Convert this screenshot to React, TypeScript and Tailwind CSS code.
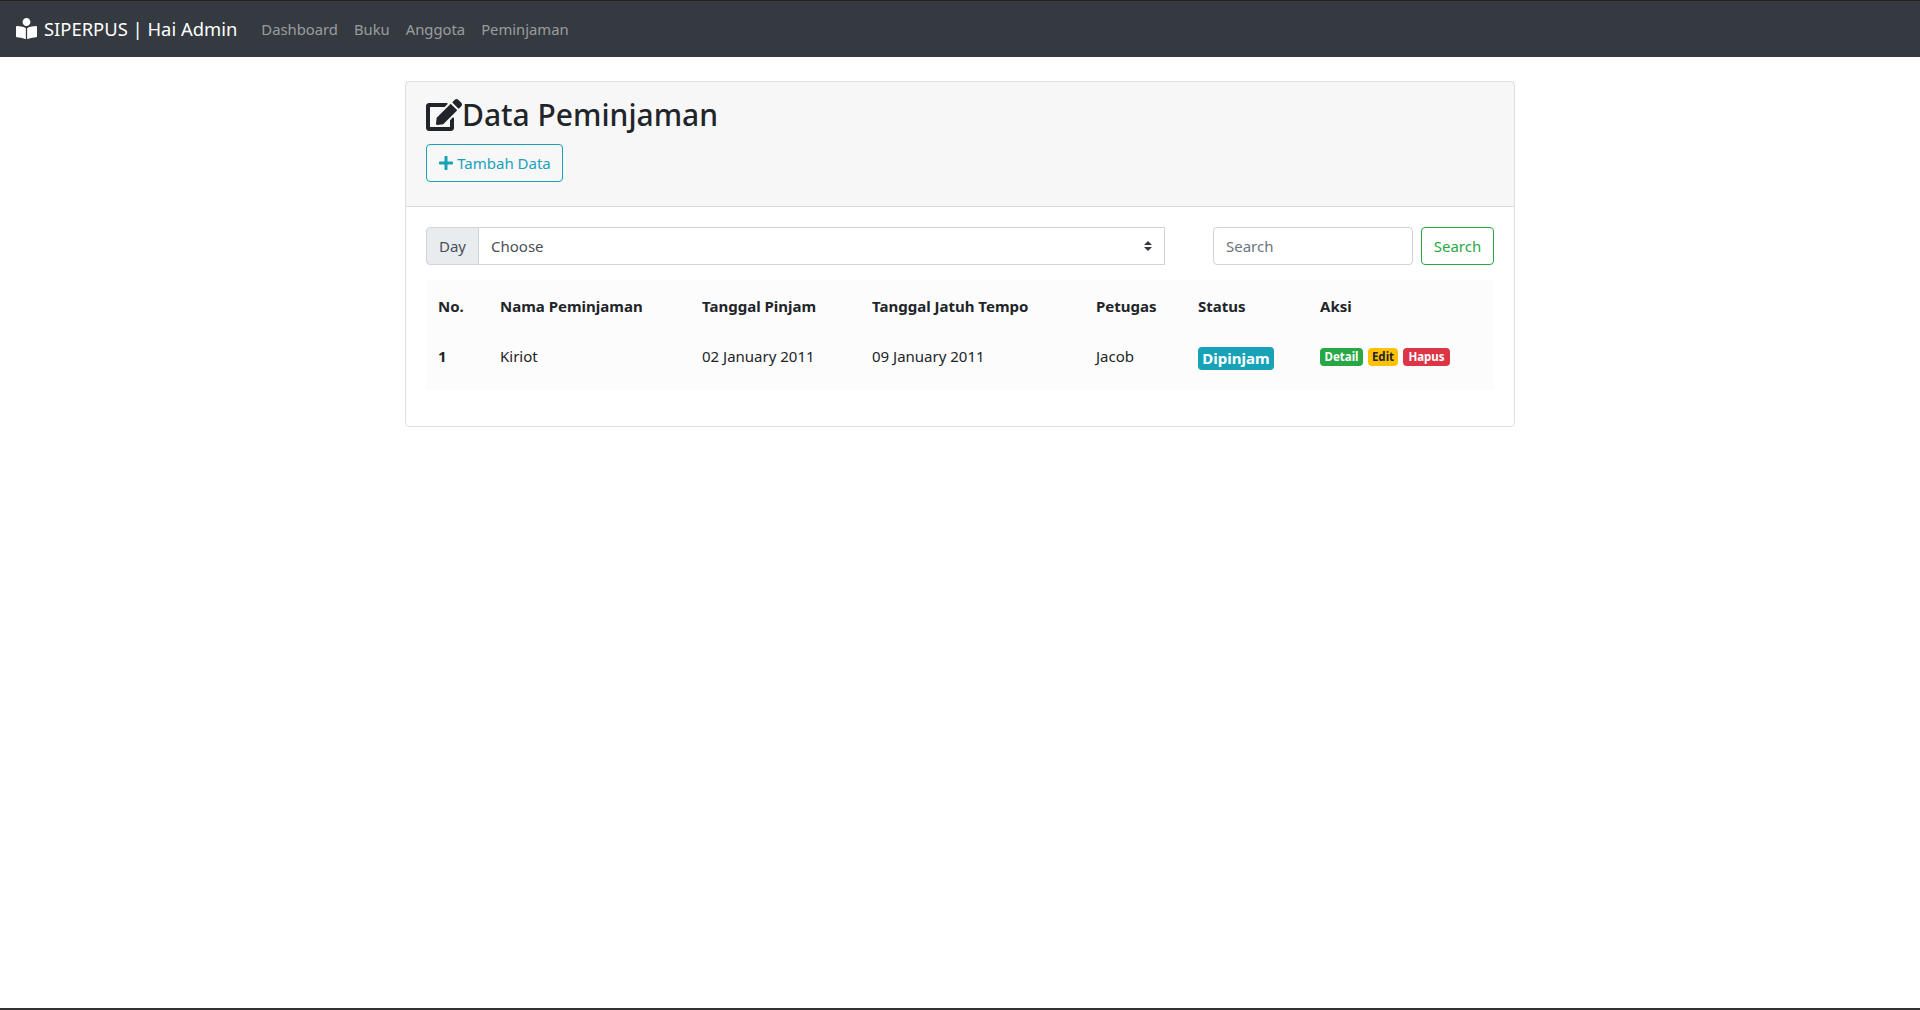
import React from 'react';
import { FaBookReader, FaEdit, FaPlus } from 'react-icons/fa';

const navLinks = ['Dashboard', 'Buku', 'Anggota', 'Peminjaman'];

const columns = [
  { label: 'No.', width: 'w-[62px]' },
  { label: 'Nama Peminjaman', width: 'w-[202px]' },
  { label: 'Tanggal Pinjam', width: 'w-[170px]' },
  { label: 'Tanggal Jatuh Tempo', width: 'w-[224px]' },
  { label: 'Petugas', width: 'w-[102px]' },
  { label: 'Status', width: 'w-[122px]' },
  { label: 'Aksi', width: 'w-[186px]' },
];

function Navbar() {
  return (
    <nav className="flex h-[56px] items-center bg-[#343a40] px-4 shrink-0">
      <a className="flex items-center text-[18.4px] text-white mr-6">
        <FaBookReader size={21} className="mr-[7px]" />
        SIPERPUS | Hai Admin
      </a>
      <div className="flex items-center gap-4 text-[14.8px]">
        {navLinks.map((link) => (
          <a key={link} className="text-white/50">
            {link}
          </a>
        ))}
      </div>
    </nav>
  );
}

function Filters() {
  return (
    <div className="flex items-center">
      <div className="flex w-[739px] h-[38px]">
        <span className="flex items-center justify-center w-[53px] bg-[#e9ecef] border border-[#ced4da] rounded-l text-[#495057]">
          Day
        </span>
        <div className="relative flex-1 -ml-px">
          <select className="appearance-none w-full h-full pl-3 pr-7 bg-white border border-[#ced4da] text-[#495057] rounded-none">
            <option>Choose</option>
          </select>
          <svg
            className="absolute right-[13px] top-[14px] text-[#343a40]"
            width="8"
            height="10"
            viewBox="0 0 4 5"
            fill="currentColor"
          >
            <path d="M2 0L0 2h4zm0 5L0 3h4z" />
          </svg>
        </div>
      </div>
      <input
        placeholder="Search"
        className="ml-auto w-[200px] h-[38px] px-3 bg-white border border-[#ced4da] rounded placeholder:text-[#6c757d]"
      />
      <button className="ml-2 w-[73px] h-[38px] border border-[#28a745] rounded text-[#28a745]">
        Search
      </button>
    </div>
  );
}

function Badge({ className, children }: { className: string; children: React.ReactNode }) {
  return (
    <span className={`inline-flex items-center justify-center rounded font-bold ${className}`}>
      {children}
    </span>
  );
}

function LoanTable() {
  return (
    <table className="mt-[15px] w-[1068px] table-fixed bg-[#fcfcfc] text-left">
      <thead>
        <tr className="h-[51px]">
          {columns.map((col) => (
            <th key={col.label} className={`px-3 pt-[2px] font-bold ${col.width}`}>
              {col.label}
            </th>
          ))}
        </tr>
      </thead>
      <tbody>
        <tr className="h-[59px] align-top">
          <th className="px-3 pt-[14px] font-bold">1</th>
          <td className="px-3 pt-[14px]">Kiriot</td>
          <td className="px-3 pt-[14px]">02 January 2011</td>
          <td className="px-3 pt-[14px]">09 January 2011</td>
          <td className="px-3 pt-[14px]">Jacob</td>
          <td className="px-3 pt-4">
            <Badge className="w-[76px] h-[23px] bg-[#17a2b8] text-white">Dipinjam</Badge>
          </td>
          <td className="px-3 pt-[17px]">
            <div className="flex items-center gap-[5px]">
              <Badge className="w-[43px] h-[18px] bg-[#28a745] text-white text-[11.5px]">Detail</Badge>
              <Badge className="w-[30px] h-[18px] bg-[#ffc107] text-[#212529] text-[11.5px]">Edit</Badge>
              <Badge className="w-[47px] h-[18px] bg-[#dc3545] text-white text-[11.5px]">Hapus</Badge>
            </div>
          </td>
        </tr>
      </tbody>
    </table>
  );
}

export default function App() {
  return (
    <div className="flex flex-col h-screen bg-white text-[15px] text-[#212529] font-['Noto_Sans',sans-serif] border-t border-[#222] border-b-2 border-b-[#333]">
      <Navbar />
      <main className="flex-1 pt-6">
        <div className="w-[1110px] mx-auto border border-black/[0.125] rounded">
          <div className="h-[125px] px-5 pt-[14px] bg-black/[0.03] border-b border-black/[0.125]">
            <h2 className="flex items-center text-[30px] leading-[38px] font-medium">
              <FaEdit size={36} />
              Data Peminjaman
            </h2>
            <button className="flex items-center justify-center mt-[10px] w-[137px] h-[38px] border border-[#17a2b8] rounded text-[#17a2b8]">
              <FaPlus size={16} className="mr-[3px]" />
              Tambah Data
            </button>
          </div>
          <div className="px-5 pt-5 pb-9">
            <Filters />
            <LoanTable />
          </div>
        </div>
      </main>
    </div>
  );
}
